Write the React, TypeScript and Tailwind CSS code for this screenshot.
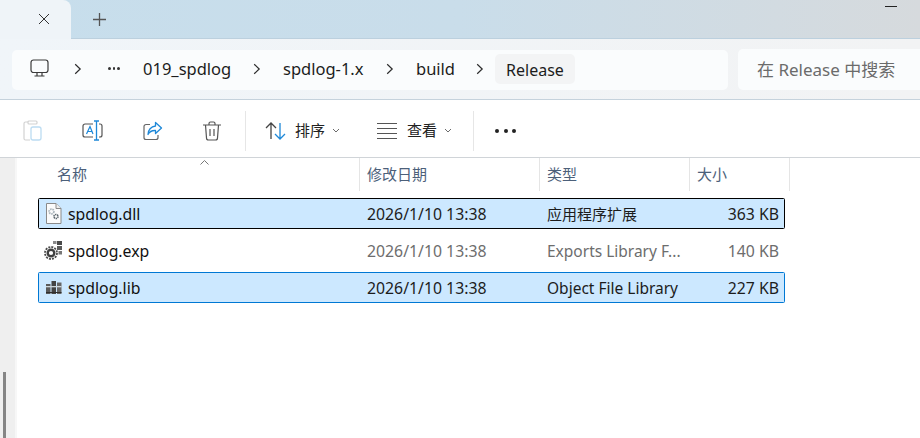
import React from "react";

const font = "font-['Noto_Sans','Noto_Sans_CJK_SC',sans-serif]";

function Chevron() {
  return (
    <svg width="8" height="12" viewBox="0 0 8 12" fill="none" stroke="#2b2b2b" strokeWidth="1.2">
      <path d="M1.2 1.2 6.2 6 1.2 10.8" />
    </svg>
  );
}

function SmallChevron({ className = "" }: { className?: string }) {
  return (
    <svg className={className} width="8" height="5" viewBox="0 0 8 5" fill="none" stroke="#6b6b6b" strokeWidth="1">
      <path d="M1 1l3 3 3-3" />
    </svg>
  );
}

function Crumb({ w, text }: { w: number; text: string }) {
  return (
    <span style={{ width: w }} className="text-[16.5px] pt-[2px] text-[#1c1c1c] whitespace-nowrap shrink-0">
      {text}
    </span>
  );
}

function DllIcon() {
  return (
    <svg width="17" height="21" viewBox="0 0 17 21">
      <path d="M1.500.5h9.500l5 5v15H1.500z" fill="#fbfbfb" stroke="#8a8a8a" />
      <path d="M11 .5v5h5" fill="#eee" stroke="#8a8a8a" />
      <circle cx="6.500" cy="8.500" r="2.400" fill="none" stroke="#a9b4bb" strokeWidth="1.800" strokeDasharray="1.500 .7" />
      <circle cx="11" cy="13.500" r="2" fill="none" stroke="#5a656c" strokeWidth="1.600" strokeDasharray="1.300 .6" />
    </svg>
  );
}

function ExpIcon() {
  return (
    <svg width="19" height="19" viewBox="0 0 19 19">
      <rect x="9" y="0" width="3.500" height="3" fill="#8a8a8a" />
      <rect x="13" y="0" width="5" height="4" fill="#4a4a4a" />
      <rect x="13" y="5" width="5" height="4" fill="#5a5a5a" />
      <rect x="14.500" y="10" width="3.500" height="3.500" fill="#777" />
      <circle cx="7" cy="12" r="3.300" fill="none" stroke="#3f3f3f" strokeWidth="2.400" />
      <circle cx="7" cy="12" r="6" fill="none" stroke="#4a4a4a" strokeWidth="1.800" strokeDasharray="2 1.100" />
    </svg>
  );
}

function LibIcon() {
  return (
    <svg width="16" height="14" viewBox="0 0 16 14">
      <rect x="0" y="3" width="4.500" height="10" fill="#5a5a5a" />
      <rect x="5.500" y="0" width="4.500" height="13" fill="#444" />
      <rect x="11" y="1.500" width="4.500" height="11.500" fill="#666" />
      <rect x="0" y="5" width="15.500" height="1.300" fill="#cfd8dc" />
      <rect x="0" y="11" width="15.500" height="1" fill="#2f2f2f" />
    </svg>
  );
}

type Row = {
  name: string;
  date: string;
  type: string;
  size: string;
  icon: React.ReactNode;
  box: string;
  typeSize: string;
  dim?: boolean;
};

const rows: Row[] = [
  { name: "spdlog.dll", date: "2026/1/10 13:38", type: "应用程序扩展", typeSize: "text-[15px]", size: "363 KB", icon: <DllIcon />, box: "bg-[#cce8ff] border-black" },
  { name: "spdlog.exp", date: "2026/1/10 13:38", type: "Exports Library F...", typeSize: "text-[15.500px]", size: "140 KB", icon: <ExpIcon />, box: "border-transparent", dim: true },
  { name: "spdlog.lib", date: "2026/1/10 13:38", type: "Object File Library", typeSize: "text-[15.500px]", size: "227 KB", icon: <LibIcon />, box: "bg-[#cce8ff] border-[#0078d4]" },
];

export default function App() {
  return (
    <div className={`${font} relative w-[920px] h-[438px] overflow-hidden bg-white flex flex-col`}>
      {/* Title bar */}
      <div className="h-[39px] shrink-0 flex bg-gradient-to-r from-[#c7deec] via-[#c9ddea] to-[#d6dadd] border-b border-[#bcd0de]">
        <div className="w-[71px] h-[39px] bg-[#eff4f8] rounded-tr-[8px] flex items-center justify-center pl-[16px] pb-[1px]">
          <svg width="12" height="12" viewBox="0 0 12 12" stroke="#333" strokeWidth="1">
            <path d="M1 1l10 10M11 1 1 11" />
          </svg>
        </div>
        <div className="ml-[22px] h-[39px] flex items-center">
          <svg width="13" height="13" viewBox="0 0 13 13" stroke="#555" strokeWidth="1.300">
            <path d="M6.500 0v13M0 6.500h13" />
          </svg>
        </div>
      </div>
      <div className="absolute right-[23px] top-[6px] w-[12px] h-[1px] bg-[#222]" />

      {/* Address row */}
      <div className="h-[61px] shrink-0 flex items-center pl-[12px] pt-[1px] bg-gradient-to-r from-[#f0f5f9] to-[#f2f3f4] border-b border-[#c5d2dc]">
        <div className="w-[716px] h-[40px] rounded-[5px] bg-[#fafcfd] flex items-center shrink-0 pb-[2px]">
          <div className="w-[62px] pl-[18px] shrink-0 flex">
            <svg width="19" height="19" viewBox="0 0 19 19" fill="none" stroke="#3b3b3b" strokeWidth="1.200">
              <rect x="1" y="1" width="17" height="12.500" rx="2.500" />
              <path d="M7 13.500v3M12 13.500v3M4.500 17h10" />
            </svg>
          </div>
          <div className="w-[29px] shrink-0 flex"><Chevron /></div>
          <span className="w-[40px] shrink-0 flex gap-[2px] pl-[5px]">
            <i className="w-[2.500px] h-[2.500px] rounded-full bg-[#333]" />
            <i className="w-[2.500px] h-[2.500px] rounded-full bg-[#333]" />
            <i className="w-[2.500px] h-[2.500px] rounded-full bg-[#333]" />
          </span>
          <Crumb w={110} text="019_spdlog" />
          <div className="w-[30px] shrink-0 flex"><Chevron /></div>
          <Crumb w={103} text="spdlog-1.x" />
          <div className="w-[30px] shrink-0 flex"><Chevron /></div>
          <Crumb w={60} text="build" />
          <div className="w-[19px] shrink-0 flex"><Chevron /></div>
          <div className="w-[80px] h-[30px] rounded-[5px] bg-[#f3f4f5] flex items-center justify-center pt-[2px] text-[16px] text-[#1c1c1c]">
            Release
          </div>
        </div>
        <div className="ml-[10px] flex-1 h-[41px] rounded-l-[5px] bg-[#fafcfd] flex items-center pl-[19px] text-[17px] text-[#6b6b6b] whitespace-nowrap">
          在 Release 中搜索
        </div>
      </div>

      {/* Toolbar */}
      <div className="h-[58px] shrink-0 flex items-center pt-[4px] border-b border-[#d0d4d8] bg-white">
        <div className="w-[82px] pl-[23px] shrink-0 flex">
          <svg width="19" height="21" viewBox="0 0 19 21" fill="none">
            <path d="M5 2H2.500A1.500 1.500 0 0 0 1 3.500v15A1.500 1.500 0 0 0 2.500 20H7" stroke="#d2d2d2" strokeWidth="1.200" />
            <rect x="5" y="1" width="9" height="3" rx="1" stroke="#d2d2d2" strokeWidth="1.200" />
            <rect x="8" y="7" width="10" height="13" rx="2" stroke="#bcdcf2" strokeWidth="1.300" />
          </svg>
        </div>
        <div className="w-[61px] shrink-0 flex">
          <svg width="21" height="21" viewBox="0 0 21 21" fill="none">
            <path d="M11 4H3a2 2 0 0 0-2 2v9a2 2 0 0 0 2 2h8M17 4h1a2 2 0 0 1 2 2v9a2 2 0 0 1-2 2h-1" stroke="#555" strokeWidth="1.200" />
            <path d="M12 1h5M12 20h5M14.500 1v19" stroke="#1e88d8" strokeWidth="1.300" />
            <path d="M4.500 14 8 6.500l3 7.500M5.500 11.500h5" stroke="#1e88d8" strokeWidth="1.200" />
          </svg>
        </div>
        <div className="w-[60px] shrink-0 flex">
          <svg width="20" height="20" viewBox="0 0 20 20" fill="none">
            <path d="M7 3.500H3A2 2 0 0 0 1 5.500v11a2 2 0 0 0 2 2h10a2 2 0 0 0 2-2V14" stroke="#666" strokeWidth="1.200" />
            <path d="M12.500 1.500 18.500 7l-6 5.500V9.500C9 9.300 6.500 10.500 5 13.500 5 9 8 5.500 12.500 5z" stroke="#1e88d8" strokeWidth="1.300" strokeLinejoin="round" />
          </svg>
        </div>
        <div className="w-[42px] shrink-0 flex">
          <svg width="18" height="20" viewBox="0 0 18 20" fill="none" stroke="#555" strokeWidth="1.200">
            <path d="M0 4h18M6 4V2.500A1.500 1.500 0 0 1 7.500 1h3A1.500 1.500 0 0 1 12 2.500V4" />
            <path d="M2.500 4 3.500 17a2 2 0 0 0 2 2h7a2 2 0 0 0 2-2L15.500 4" />
            <path d="M7 8v7M11 8v7" />
          </svg>
        </div>
        <div className="w-[1px] h-[40px] bg-[#e6e6e6] shrink-0" />
        <div className="ml-[19px] w-[21px] shrink-0 flex">
          <svg width="21" height="18" viewBox="0 0 21 18" fill="none" strokeWidth="1.300">
            <path d="M6 17V1M1 6l5-5 5 5" stroke="#444" />
            <path d="M15 1v16M10 12l5 5 5-5" stroke="#1e88d8" />
          </svg>
        </div>
        <span className="ml-[9px] text-[15px] text-[#222] w-[37px] shrink-0 whitespace-nowrap">排序</span>
        <SmallChevron className="shrink-0" />
        <div className="ml-[37px] w-[20px] shrink-0 flex flex-col gap-[4px]">
          <i className="h-[1px] bg-[#555]" />
          <i className="h-[1px] bg-[#555]" />
          <i className="h-[1px] bg-[#555]" />
          <i className="h-[1px] bg-[#555]" />
        </div>
        <span className="ml-[10px] text-[15px] text-[#222] w-[37px] shrink-0 whitespace-nowrap">查看</span>
        <SmallChevron className="shrink-0" />
        <div className="ml-[21px] w-[1px] h-[40px] bg-[#e6e6e6] shrink-0" />
        <div className="ml-[21px] flex gap-[4.500px]">
          <i className="w-[4px] h-[4px] rounded-full bg-[#222]" />
          <i className="w-[4px] h-[4px] rounded-full bg-[#222]" />
          <i className="w-[4px] h-[4px] rounded-full bg-[#222]" />
        </div>
      </div>

      {/* Body */}
      <div className="flex-1 flex min-h-0">
        <div className="w-[15px] shrink-0 bg-[#efefef] flex flex-col justify-end pl-[3px]">
          <div className="w-[3px] h-[66px] bg-[#858585]" />
        </div>
        <div className="w-[2px] shrink-0 bg-[#f7f7f7]" />
        <div className="flex-1 min-w-0">
          {/* Header */}
          <div className="relative flex h-[33px] text-[15px] text-[#4c607a]">
            <div className="w-[343px] shrink-0 pl-[40px] pt-[5px] border-r border-[#e5e5e5]">名称</div>
            <div className="w-[180px] shrink-0 pl-[7px] pt-[5px] border-r border-[#e5e5e5]">修改日期</div>
            <div className="w-[150px] shrink-0 pl-[7px] pt-[5px] border-r border-[#e5e5e5]">类型</div>
            <div className="w-[100px] shrink-0 pl-[7px] pt-[5px] border-r border-[#e5e5e5]">大小</div>
            <svg className="absolute left-[183px] top-[2px]" width="9" height="5" viewBox="0 0 9 5" fill="none" stroke="#777">
              <path d="M.5 4.500l4-4 4 4" />
            </svg>
          </div>
          {/* Rows */}
          <div className="ml-[21px] mt-[7px] w-[747px] flex flex-col gap-[6px]">
            {rows.map((r) => (
              <div key={r.name} className={`h-[31px] flex items-center rounded-[1.500px] border text-[15.800px] whitespace-nowrap ${r.box}`}>
                <div className="w-[29px] shrink-0 flex justify-center">{r.icon}</div>
                <span className="w-[299px] shrink-0 pt-[2px] text-[#111]">{r.name}</span>
                <span className={`w-[180px] shrink-0 pt-[2px] ${r.dim ? "text-[#6d6d6d]" : "text-[#1c1c1c]"}`}>{r.date}</span>
                <span className={`w-[168px] shrink-0 pt-[2px] ${r.typeSize} ${r.dim ? "text-[#6d6d6d]" : "text-[#1c1c1c]"}`}>{r.type}</span>
                <span className={`w-[64px] shrink-0 pt-[2px] text-right text-[15.800px] ${r.dim ? "text-[#6d6d6d]" : "text-[#1c1c1c]"}`}>{r.size}</span>
              </div>
            ))}
          </div>
        </div>
      </div>
    </div>
  );
}
